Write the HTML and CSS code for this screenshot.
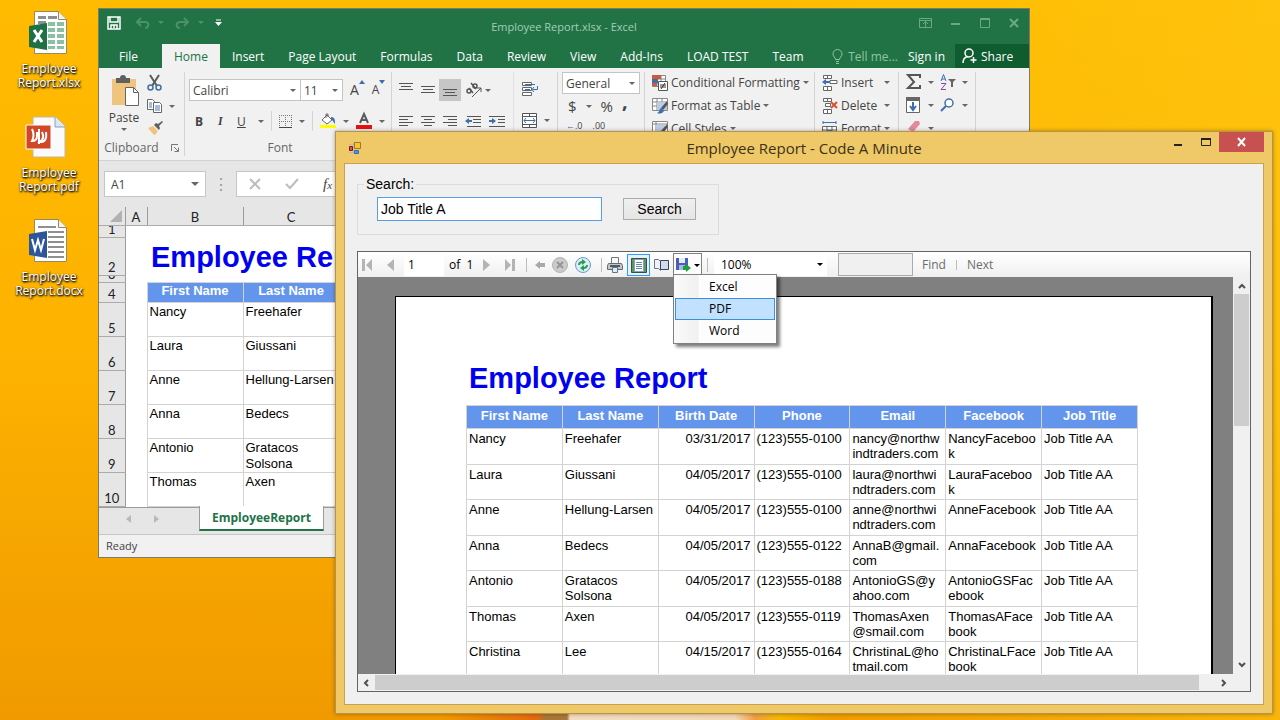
FILE: index.html
```html
<!DOCTYPE html>
<html lang="en">
<head>
    <meta charset="UTF-8">
    <meta name="viewport" content="width=device-width, initial-scale=1.0">
    <title>Employee Report - Code A Minute</title>
    <link rel="stylesheet" href="styles.css">
</head>
<body>
<div class="desktop">

    <!-- Desktop shortcuts -->
    <nav class="shortcuts">
        <a href="#" class="shortcut">
            <svg width="42" height="46" viewBox="0 0 42 46">
                <path d="M6.500 1.500h24l8 8v34h-32z" fill="#fff" stroke="#9a8a5a"/>
                <path d="M30.500 1.500v8h8" fill="#f2f2f2" stroke="#9a8a5a"/>
                <path d="M10 6h8v3h-8zM20 6h9v3h-9zM10 11h8v3h-8z" fill="#8f8f8f"/>
                <path d="M20 12h7v4h-7zM29 12h7v4h-7zM20 18h7v4h-7zM29 18h7v4h-7zM20 24h7v4h-7zM29 24h7v4h-7zM20 30h7v4h-7zM29 30h7v4h-7zM20 36h7v3h-7zM29 36h7v3h-7z" fill="#8cc0a2"/>
                <path d="M1 16l18-3v27l-18-3z" fill="#1e7145"/>
                <path d="M6 20l8 12M14 20l-8 12" stroke="#fff" stroke-width="3"/>
            </svg>
            <span>Employee Report.xlsx</span>
        </a>
        <a href="#" class="shortcut">
            <svg width="42" height="46" viewBox="0 0 42 46">
                <path d="M5 3h23l9 9v31h-32z" fill="#fafafc" stroke="#c8b890"/>
                <path d="M27 3v10h10" fill="#dbe6f4" stroke="#8aa0c0"/>
                <path d="M-2 11h25v24h-25z" fill="#d24726" stroke="#fff"/>
                <path d="M4 15c2 4 2 8 0 12c4 0 5-2 5-5v-4M11 15v15M14 18c2 4 2 7-2 10c5 0 7-3 6-10" fill="none" stroke="#fff" stroke-width="2"/>
            </svg>
            <span>Employee Report.pdf</span>
        </a>
        <a href="#" class="shortcut">
            <svg width="42" height="46" viewBox="0 0 42 46">
                <path d="M6.500 1.500h24l8 8v34h-32z" fill="#fff" stroke="#9a8a5a"/>
                <path d="M30.500 1.500v8h8" fill="#f2f2f2" stroke="#9a8a5a"/>
                <path d="M10 9h18M20 14h16M20 19h16M20 24h16M20 29h16M20 34h16M20 39h16" stroke="#8f8f8f" stroke-width="2"/>
                <path d="M1 16l18-3v27l-18-3z" fill="#2b579a"/>
                <path d="M4 21l3 11l3-10l3 10l3-11" fill="none" stroke="#fff" stroke-width="2"/>
            </svg>
            <span>Employee Report.docx</span>
        </a>
    </nav>

    <!-- Excel -->
    <section class="excel">
        <header class="excel-title">
            <div class="quick-access">
                <svg width="14" height="14" viewBox="0 0 14 14"><path d="M1 1h12v12h-12zM3 1v5h8v-5M4 13v-4h6v4M7 9v3" fill="none" stroke="#fff" stroke-width="1.500"/></svg>
                <svg class="faded" width="15" height="12" viewBox="0 0 15 12"><path d="M6 1l-4 4l4 4M2 5h8c5 0 4 6 0 6" fill="none" stroke="currentColor" stroke-width="2"/></svg>
                <i class="caret faded"></i>
                <svg class="faded redo" width="15" height="12" viewBox="0 0 15 12"><path d="M9 1l4 4l-4 4M13 5h-8c-5 0-4 6 0 6" fill="none" stroke="currentColor" stroke-width="2"/></svg>
                <i class="caret faded"></i>
                <svg class="customize" width="7" height="8" viewBox="0 0 7 8"><path d="M1 1h5" stroke="#fff"/><path d="M0 3h7l-3.500 4z" fill="#fff"/></svg>
            </div>
            <span class="excel-name">Employee Report.xlsx - Excel</span>
            <div class="excel-controls">
                <svg width="13" height="10" viewBox="0 0 13 10"><path d="M.5.500h12v9h-12zM1 2.500h11M6.500 9v-5M4 6l2.500-2.500l2.500 2.500" fill="none" stroke="currentColor"/></svg>
                <svg width="10" height="10" viewBox="0 0 10 10"><path d="M0 6h9" stroke="currentColor" stroke-width="2"/></svg>
                <svg width="10" height="10" viewBox="0 0 10 10"><path d="M.5.500h9v9h-9zM1 1.500h8" fill="none" stroke="currentColor"/></svg>
                <svg width="10" height="10" viewBox="0 0 10 10"><path d="M1 1l8 8M9 1l-8 8" stroke="currentColor" stroke-width="2"/></svg>
            </div>
        </header>

        <nav class="ribbon-tabs">
            <button class="file">File</button>
            <button class="active">Home</button>
            <button>Insert</button>
            <button>Page Layout</button>
            <button>Formulas</button>
            <button>Data</button>
            <button>Review</button>
            <button>View</button>
            <button>Add-Ins</button>
            <button>LOAD TEST</button>
            <button>Team</button>
            <button class="tell-me">
                <svg width="11" height="15" viewBox="0 0 11 15"><path d="M3.500 10.500c0-2-2.500-3-2.500-5.500a4.500 4.500 0 0 1 9 0c0 2.500-2.500 3.500-2.500 5.500zM4 12.500h3M4 14.500h3" fill="none" stroke="currentColor"/></svg>
                Tell me...
            </button>
            <button class="sign-in">Sign in</button>
            <button class="share">
                <svg width="15" height="16" viewBox="0 0 15 16"><circle cx="7" cy="5" r="4" fill="none" stroke="#fff" stroke-width="1.500"/><path d="M1 15c0-4 2-6 5-6.500M11.500 9v6M8.500 12h6" fill="none" stroke="#fff" stroke-width="1.500"/></svg>
                Share
            </button>
        </nav>

        <div class="ribbon">
            <div class="group clipboard">
                <div class="clipboard-tools">
                    <button class="paste">
                        <svg width="30" height="32" viewBox="0 0 30 32">
                            <path d="M3 4h24v26h-24z" fill="#efc57d"/>
                            <path d="M7 8v-5h4a3 3 0 0 1 6 0h4v5z" fill="#606060"/>
                            <path d="M16.500 12.500h8l5 5v13h-13z" fill="#fff" stroke="#666"/><path d="M24.500 12.500v5h5" fill="none" stroke="#666"/>
                        </svg>
                        Paste
                        <i class="caret"></i>
                    </button>
                    <div class="clip-side">
                        <svg width="15" height="16" viewBox="0 0 15 16"><path d="M3 0l7 11M12 0l-7 11" stroke="#5a5a5a" stroke-width="2"/><circle cx="3.500" cy="12.500" r="2.500" fill="none" stroke="#41719c" stroke-width="1.500"/><circle cx="11.500" cy="12.500" r="2.500" fill="none" stroke="#41719c" stroke-width="1.500"/></svg>
                        <span class="with-caret">
                            <svg width="16" height="14" viewBox="0 0 16 14"><path d="M.5.500h5l2 2v8h-7z" fill="#fff" stroke="#666"/><path d="M6.500 3.500h6l2 2v8h-8z" fill="#fff" stroke="#666"/><path d="M2 4h3M2 6h3M2 8h3M8 7h5M8 9h5M8 11h5" stroke="#4a7ab0"/></svg>
                            <i class="caret"></i>
                        </span>
                        <svg width="16" height="14" viewBox="0 0 16 14"><path d="M1 7l5-2l5 5l-3 4l-2-1z" fill="#efc57d"/><path d="M7 4l5 5l1-2l-1-2l4-4l-1-1l-4 3l-2-1z" fill="#5f5f5f"/></svg>
                    </div>
                </div>
                <div class="group-label">Clipboard
                    <svg width="8" height="8" viewBox="0 0 8 8"><path d="M.5 7v-6.500h6.500M3 3l4 4M7.500 3.500v4h-4" fill="none" stroke="#777"/></svg>
                </div>
            </div>

            <div class="group font">
                <div class="row font-row">
                    <label class="combo font-name"><select aria-label="Font"><option>Calibri</option></select><i class="caret"></i></label>
                    <label class="combo font-size"><select aria-label="Font size"><option>11</option></select><i class="caret"></i></label>
                    <span class="grow">A<svg width="6" height="4" viewBox="0 0 6 4"><path d="M0 4l3-4l3 4z" fill="#3d6fae"/></svg></span>
                    <span class="grow small">A<svg width="6" height="4" viewBox="0 0 6 4"><path d="M0 0l3 4l3-4z" fill="#3d6fae"/></svg></span>
                </div>
                <div class="row style-row">
                    <b>B</b>
                    <em>I</em>
                    <u>U</u>
                    <i class="caret"></i>
                    <i class="bar"></i>
                    <svg width="13" height="13" viewBox="0 0 13 13"><path d="M.5 0v12M6.500 0v12M12.500 0v12M0 .5h13M0 6.500h13" stroke="#777" stroke-dasharray="1 1"/><path d="M0 12.500h13" stroke="#444"/></svg>
                    <i class="caret"></i>
                    <i class="bar"></i>
                    <svg width="16" height="16" viewBox="0 0 16 16"><path d="M2 7l5-5l5 5l-5 4zM6 5v-4h2v3" fill="#fff" stroke="#666"/><path d="M11 4c4 0 4 3 4 7c-2-2-2-4-4-5z" fill="#3d6fae"/><path d="M0 12h16v3h-16z" fill="#ff0"/></svg>
                    <i class="caret"></i>
                    <svg width="16" height="16" viewBox="0 0 16 16"><path d="M4 10l4-9l4 9M5 7h6" fill="none" stroke="#5a5a5a" stroke-width="2"/><path d="M0 12h16v4h-16z" fill="#e81010"/></svg>
                    <i class="caret"></i>
                </div>
                <div class="group-label">Font</div>
            </div>

            <div class="group align">
                <div class="align-main">
                    <div class="row align-row">
                        <svg width="14" height="14" viewBox="0 0 14 14"><path d="M0 .5h14M2 3.500h10M0 6.500h14" stroke="#555"/></svg>
                        <svg width="14" height="14" viewBox="0 0 14 14"><path d="M0 3.500h14M2 6.500h10M0 9.500h14" stroke="#555"/></svg>
                        <span class="pressed"><svg width="14" height="14" viewBox="0 0 14 14"><path d="M0 6.500h14M2 9.500h10M0 12.500h14" stroke="#555"/></svg></span>
                        <span class="with-caret">
                            <svg width="18" height="16" viewBox="0 0 18 16"><circle cx="4" cy="9" r="2" fill="none" stroke="#555" stroke-width="1.500"/><path d="M4 6l4 5M6 1l5 6" stroke="#555" stroke-width="1.500"/><circle cx="10" cy="4" r="2" fill="none" stroke="#555" stroke-width="1.500"/><path d="M7 15l9-9M12 6h4v4" fill="none" stroke="#555"/></svg>
                            <i class="caret"></i>
                        </span>
                    </div>
                    <div class="row align-row">
                        <svg width="14" height="12" viewBox="0 0 14 12"><path d="M0 .5h14M0 3.500h9M0 6.500h14M0 9.500h9" stroke="#555"/></svg>
                        <svg width="14" height="12" viewBox="0 0 14 12"><path d="M0 .5h14M3 3.500h8M0 6.500h14M3 9.500h8" stroke="#555"/></svg>
                        <svg width="14" height="12" viewBox="0 0 14 12"><path d="M0 .5h14M5 3.500h9M0 6.500h14M5 9.500h9" stroke="#555"/></svg>
                        <svg width="16" height="12" viewBox="0 0 16 12"><path d="M2 .5h14M8 3.500h8M8 6.500h8M2 10.500h14" stroke="#555"/><path d="M0 5l4-3v2h3v2h-3v2z" fill="#3d6fae"/></svg>
                        <svg width="16" height="12" viewBox="0 0 16 12"><path d="M0 .5h16M9 3.500h7M9 6.500h7M0 10.500h16" stroke="#555"/><path d="M7 5l-4-3v2h-3v2h3v2z" fill="#3d6fae"/></svg>
                    </div>
                </div>
                <div class="wrap-merge">
                    <svg width="16" height="16" viewBox="0 0 16 16"><path d="M.5 1.500h9v3h-9zM.5 6.500h9v3h-9zM.5 11.500h9v3h-9z" fill="#fff" stroke="#666"/><path d="M3 3.500h10M3 8.500h5" stroke="#3d6fae"/><path d="M15.500 5v3.500h-5M12 6l-2 2.500l2 2.500" fill="none" stroke="#3d6fae"/></svg>
                    <span class="with-caret">
                        <svg width="15" height="15" viewBox="0 0 15 15"><path d="M.5.500h14v14h-14zM.5 3.500h14M.5 11.500h14M7.500 0v3M7.500 12v3" fill="#fff" stroke="#555"/><path d="M2 7.500h11M4 5l-2 2.500l2 2.500M11 5l2 2.500l-2 2.500" fill="none" stroke="#3d6fae"/></svg>
                        <i class="caret"></i>
                    </span>
                </div>
            </div>

            <div class="group number">
                <label class="combo"><select aria-label="Number format"><option>General</option></select><i class="caret"></i></label>
                <div class="row symbols"><span>$</span><i class="caret"></i><span>%</span><span class="comma">,</span></div>
                <div class="row decimals"><span><i>←</i>.0<br>.00</span><span>.00<br><i>→</i>.0</span></div>
            </div>

            <div class="group styles">
                <button><svg width="16" height="16" viewBox="0 0 16 16"><path d="M.5.500h13v11h-13zM5 0v11M9 0v11M0 4h14M0 8h14" fill="#fff" stroke="#888"/><path d="M0 0h9v4h-9z" fill="#d0583c"/><path d="M0 4h6v4h-6z" fill="#3d6fae"/><path d="M0 8h5v3h-5z" fill="#d0583c"/><path d="M6.500 6.500h9v9h-9z" fill="#fff" stroke="#555"/><path d="M8 10h6M8 12h6M13 8l-4 6" stroke="#333"/></svg>Conditional Formatting<i class="caret"></i></button>
                <button><svg width="16" height="16" viewBox="0 0 16 16"><path d="M.5.500h15v12h-15zM5 0v12M10 0v12M0 4h16M0 8h16" fill="#fff" stroke="#888"/><path d="M5 4h10v8h-10z" fill="#b9cde4"/><path d="M15 3l-6 7l2 2l5-6z" fill="#555"/><path d="M9 10l3 3c-2 3-5 3-7 2c3-1 2-4 4-5z" fill="#3d6fae"/></svg>Format as Table<i class="caret"></i></button>
                <button><svg width="16" height="16" viewBox="0 0 16 16"><path d="M.5.500h15v12h-15zM4 0v12M0 3h16" fill="#fff" stroke="#888"/><path d="M4 4h9v8h-9z" fill="#b9cde4"/><path d="M15 3l-6 7l2 2l5-6z" fill="#555"/></svg>Cell Styles<i class="caret"></i></button>
            </div>

            <div class="group cells">
                <button><svg width="16" height="16" viewBox="0 0 16 16"><path d="M1.500.500h8v3h-8zM1.500 11.500h8v4h-8zM5.500 0v3M5.500 11v4M8 5.500h7v3h-7z" fill="#fff" stroke="#666"/><path d="M0 7l4-3v2h4v2h-4v2z" fill="#3d6fae"/></svg><span>Insert</span><i class="caret"></i></button>
                <button><svg width="16" height="16" viewBox="0 0 16 16"><path d="M1.500.500h8v3h-8zM1.500 11.500h8v4h-8zM5.500 0v3M5.500 11v4M3.500 5.500h5v3h-5z" fill="#fff" stroke="#666"/><path d="M9 4l6 6M15 4l-6 6" stroke="#d6532f" stroke-width="2"/></svg><span>Delete</span><i class="caret"></i></button>
                <button><svg width="16" height="16" viewBox="0 0 16 16"><path d="M1 1.500h13M1 0v3M14 0v3" stroke="#3d6fae"/><path d="M.5 5.500h14v10h-14zM5 5v10M10 5v10M0 9h15" fill="#fff" stroke="#666"/><path d="M5 9h5v5h-5z" fill="#3d6fae"/></svg><span>Format</span><i class="caret"></i></button>
            </div>

            <div class="group editing">
                <svg width="16" height="16" viewBox="0 0 16 16"><path d="M14 4v-3h-12l6 7l-6 6h12v-3" fill="none" stroke="#555" stroke-width="2"/></svg><i class="caret"></i>
                <svg width="16" height="16" viewBox="0 0 16 16"><path d="M1 7l2.500-6.500l2.500 6.500M2 5h3" fill="none" stroke="#3d6fae"/><path d="M1 9.500h5l-5 6h5" fill="none" stroke="#8a4aa8"/><path d="M8 5h8l-3 3v5h-2v-5z" fill="#666"/></svg><i class="caret"></i>
                <svg width="15" height="16" viewBox="0 0 15 16"><path d="M.5.500h13v15h-13z" fill="#fff" stroke="#666"/><path d="M0 0h14v4h-14z" fill="#666"/><path d="M7 5v8M4 9l3 4l3-4" fill="none" stroke="#3d6fae" stroke-width="2"/></svg><i class="caret"></i>
                <svg width="14" height="14" viewBox="0 0 14 14"><circle cx="9" cy="5" r="4" fill="#fff" stroke="#3d6fae" stroke-width="1.500"/><path d="M6 8l-5 5" stroke="#3d6fae" stroke-width="2"/></svg><i class="caret"></i>
                <svg width="16" height="16" viewBox="0 0 16 16"><path d="M9 1h4l1 3l-7 8l-5-3z" fill="#e58a9c"/></svg><i class="caret"></i>
            </div>
        </div>

        <div class="formula-bar">
            <label class="name-box"><input type="text" value="A1" aria-label="Name box"><i class="caret"></i></label>
            <i class="dots">⋮</i>
            <div class="formula">
                <svg width="12" height="12" viewBox="0 0 12 12"><path d="M1 1l10 10M11 1l-10 10" stroke="#bdbdbd" stroke-width="2"/></svg>
                <svg width="14" height="12" viewBox="0 0 14 12"><path d="M1 6l4 4l8-9" fill="none" stroke="#bdbdbd" stroke-width="2"/></svg>
                <em>f<small>x</small></em>
            </div>
        </div>

        <table class="sheet">
            <colgroup><col class="col-num"><col class="col-a"><col class="col-b"><col class="col-b"><col></colgroup>
            <thead>
                <tr><th class="corner"><svg width="12" height="12" viewBox="0 0 12 12"><path d="M12 0v12h-12z" fill="#b2b2b2"/></svg></th><th>A</th><th>B</th><th>C</th><th></th></tr>
            </thead>
            <tbody>
                <tr class="h12"><th><span>1</span></th><td></td><td></td><td></td><td></td></tr>
                <tr class="h38"><th>2</th><td></td><td colspan="3" class="sheet-title">Employee Report</td></tr>
                <tr class="h7"><th><span>3</span></th><td></td><td></td><td></td><td></td></tr>
                <tr class="h20"><th>4</th><td></td><td class="head">First Name</td><td class="head">Last Name</td><td></td></tr>
                <tr><th>5</th><td></td><td class="cell">Nancy</td><td class="cell">Freehafer</td><td></td></tr>
                <tr><th>6</th><td></td><td class="cell">Laura</td><td class="cell">Giussani</td><td></td></tr>
                <tr><th>7</th><td></td><td class="cell">Anne</td><td class="cell">Hellung-Larsen</td><td></td></tr>
                <tr><th>8</th><td></td><td class="cell">Anna</td><td class="cell">Bedecs</td><td></td></tr>
                <tr><th>9</th><td></td><td class="cell">Antonio</td><td class="cell">Gratacos<br>Solsona</td><td></td></tr>
                <tr><th>10</th><td></td><td class="cell">Thomas</td><td class="cell">Axen</td><td></td></tr>
            </tbody>
        </table>

        <div class="sheet-tabs">
            <svg width="5" height="8" viewBox="0 0 5 8"><path d="M5 0v8l-5-4z" fill="#b8b8b8"/></svg>
            <svg width="5" height="8" viewBox="0 0 5 8"><path d="M0 0v8l5-4z" fill="#b8b8b8"/></svg>
            <button>EmployeeReport</button>
        </div>
        <footer class="excel-status">Ready</footer>
    </section>

    <!-- Report viewer -->
    <section class="report-window">
        <header class="report-title">
            <svg class="app-icon" width="14" height="14" viewBox="0 0 14 14">
                <path d="M6.500 1.500h6v6h-6z" fill="#f7c52e" stroke="#9a7a28"/>
                <path d="M1.500 5.500h3v4h-3z" fill="#d35050" stroke="#8c1616"/>
                <path d="M6.500 9.500h4v3h-4z" fill="#5a92ea" stroke="#3a66b4"/>
                <path d="M5.500 1v12M1 3.500h4M1 11.500h4" stroke="#bdb9b0"/>
            </svg>
            <h1>Employee Report - Code A Minute</h1>
            <div class="window-controls">
                <svg width="8" height="10" viewBox="0 0 8 10"><path d="M0 8h8" stroke="#222" stroke-width="2"/></svg>
                <svg width="10" height="8" viewBox="0 0 10 8"><path d="M.5 1h9v6.500h-9z" fill="none" stroke="#222"/><path d="M0 1h10" stroke="#222" stroke-width="2"/></svg>
                <button class="close" aria-label="Close"><svg width="9" height="8" viewBox="0 0 9 8"><path d="M1 0l7 8M8 0l-7 8" stroke="#fff" stroke-width="2"/></svg></button>
            </div>
        </header>

        <div class="client">
            <fieldset class="search">
                <legend>Search:</legend>
                <div class="search-row">
                    <input type="text" value="Job Title A" aria-label="Search">
                    <button>Search</button>
                </div>
            </fieldset>

            <div class="viewer">
                <div class="toolbar">
                    <div class="tools nav">
                        <svg width="11" height="12" viewBox="0 0 11 12"><path d="M0 0h3v12h-3zM10 0v12l-6-6z" fill="#b4b4b4"/></svg>
                        <svg width="7" height="12" viewBox="0 0 7 12"><path d="M7 0v12l-7-6z" fill="#b4b4b4"/></svg>
                        <input type="text" class="page-no" value="1" aria-label="Current page">
                        <span class="of">of&nbsp; 1</span>
                        <svg width="7" height="12" viewBox="0 0 7 12"><path d="M0 0v12l7-6z" fill="#b4b4b4"/></svg>
                        <svg width="11" height="12" viewBox="0 0 11 12"><path d="M8 0h3v12h-3zM1 0v12l6-6z" fill="#b4b4b4"/></svg>
                    </div>
                    <i class="divider"></i>
                    <div class="tools actions">
                        <svg width="10" height="10" viewBox="0 0 10 10"><path d="M0 5l5-4v2h5v4h-5v2z" fill="#a9a9a9"/></svg>
                        <svg width="16" height="16" viewBox="0 0 16 16"><circle cx="8" cy="8" r="7.500" fill="#cbcbcb" stroke="#b4b4b4"/><path d="M5 5l6 6M11 5l-6 6" stroke="#959595" stroke-width="2"/></svg>
                        <svg width="16" height="16" viewBox="0 0 16 16"><circle cx="8" cy="8" r="7.500" fill="#dcecfa" stroke="#6a9bd0"/><path d="M4 8c0-2 1-3 4-3M12 8c0 2-1 3-4 3" fill="none" stroke="#22a045" stroke-width="2"/><path d="M7 2l4 3l-4 3zM9 8l-4 3l4 3z" fill="#22a045"/></svg>
                    </div>
                    <i class="divider"></i>
                    <div class="tools output">
                        <svg width="16" height="16" viewBox="0 0 16 16"><path d="M4.500.500h7v6h-7z" fill="#f4f8fc" stroke="#777"/><path d="M1.500 6.500h13l1 2v4h-15v-4z" fill="#c2c5ca" stroke="#66696f"/><path d="M3 9h10" stroke="#55585e" stroke-width="2"/><path d="M5.500 10.500h5v5h-5z" fill="#d9effa" stroke="#5e7686"/></svg>
                        <button class="toggled" aria-label="Print layout"><svg width="16" height="16" viewBox="0 0 16 16"><path d="M.5.500h15v14h-15z" fill="#5f9269" stroke="#2f5438"/><path d="M3.500 1.500h9v12h-9z" fill="#fff" stroke="#8aa0b8"/><path d="M5 4.500h6M5 6.500h6M5 8.500h6M5 10.500h6" stroke="#6787b8"/></svg></button>
                        <svg width="15" height="13" viewBox="0 0 15 13"><path d="M.5 10.500v-9h4l2 2v9l-2-2z" fill="#eef2f8" stroke="#6d7684"/><path d="M6.500 2.500h8v9h-8z" fill="#cfdcf0" stroke="#3a4454"/></svg>
                        <div class="export">
                            <button class="export-button" aria-label="Export"><svg width="16" height="16" viewBox="0 0 16 16"><path d="M1 1h12v12h-12z" fill="#4a5fb8"/><path d="M4 1h6v5h-6z" fill="#e6ecfa"/><path d="M4 8h6v5h-6z" fill="#a8b6e0"/><path d="M8 9h3v-2l5 4l-5 4v-2h-3z" fill="#1ea03a"/></svg><i class="caret"></i></button>
                            <div class="menu">
                                <button>Excel</button>
                                <button class="hover">PDF</button>
                                <button>Word</button>
                            </div>
                        </div>
                    </div>
                    <i class="divider"></i>
                    <label class="zoom"><select aria-label="Zoom"><option>100%</option></select><i class="caret"></i></label>
                    <input type="text" class="find-box" aria-label="Find text">
                    <a href="#">Find</a>
                    <i class="divider short"></i>
                    <a href="#">Next</a>
                </div>

                <div class="viewport">
                    <div class="canvas">
                        <article class="page">
                            <h2>Employee Report</h2>
                            <table class="report">
                                <thead>
                                    <tr><th>First Name</th><th>Last Name</th><th>Birth Date</th><th>Phone</th><th>Email</th><th>Facebook</th><th>Job Title</th></tr>
                                </thead>
                                <tbody>
                                    <tr><td>Nancy</td><td>Freehafer</td><td>03/31/2017</td><td>(123)555-0100</td><td>nancy@northw<br>indtraders.com</td><td>NancyFaceboo<br>k</td><td>Job Title AA</td></tr>
                                    <tr><td>Laura</td><td>Giussani</td><td>04/05/2017</td><td>(123)555-0100</td><td>laura@northwi<br>ndtraders.com</td><td>LauraFaceboo<br>k</td><td>Job Title AA</td></tr>
                                    <tr><td>Anne</td><td>Hellung-Larsen</td><td>04/05/2017</td><td>(123)555-0100</td><td>anne@northwi<br>ndtraders.com</td><td>AnneFacebook</td><td>Job Title AA</td></tr>
                                    <tr><td>Anna</td><td>Bedecs</td><td>04/05/2017</td><td>(123)555-0122</td><td>AnnaB@gmail.<br>com</td><td>AnnaFacebook</td><td>Job Title AA</td></tr>
                                    <tr><td>Antonio</td><td>Gratacos<br>Solsona</td><td>04/05/2017</td><td>(123)555-0188</td><td>AntonioGS@y<br>ahoo.com</td><td>AntonioGSFac<br>ebook</td><td>Job Title AA</td></tr>
                                    <tr><td>Thomas</td><td>Axen</td><td>04/05/2017</td><td>(123)555-0119</td><td>ThomasAxen<br>@smail.com</td><td>ThomasAFace<br>book</td><td>Job Title AA</td></tr>
                                    <tr><td>Christina</td><td>Lee</td><td>04/15/2017</td><td>(123)555-0164</td><td>ChristinaL@ho<br>tmail.com</td><td>ChristinaLFace<br>book</td><td>Job Title AA</td></tr>
                                </tbody>
                            </table>
                        </article>
                    </div>
                    <div class="scroll-v">
                        <svg width="8" height="6" viewBox="0 0 8 6"><path d="M1 5l3-3l3 3" fill="none" stroke="#505050" stroke-width="2"/></svg>
                        <div class="thumb"></div>
                        <svg width="8" height="6" viewBox="0 0 8 6"><path d="M1 1l3 3l3-3" fill="none" stroke="#505050" stroke-width="2"/></svg>
                    </div>
                </div>
                <div class="scroll-h">
                    <svg width="6" height="8" viewBox="0 0 6 8"><path d="M5 1l-3 3l3 3" fill="none" stroke="#505050" stroke-width="2"/></svg>
                    <div class="thumb"></div>
                    <svg width="6" height="8" viewBox="0 0 6 8"><path d="M1 1l3 3l-3 3" fill="none" stroke="#505050" stroke-width="2"/></svg>
                </div>
            </div>
        </div>
    </section>
</div>
</body>
</html>
```
FILE: styles.css
```css
* {
    margin: 0;
    padding: 0;
    box-sizing: border-box;
}

body {
    font-family: 'Open Sans', 'Noto Sans', sans-serif;
    font-size: 12px;
    color: #444;
}

button, input, select {
    font: inherit;
    color: inherit;
    background: none;
    border: none;
    border-radius: 0;
    appearance: none;
    outline: none;
}

svg {
    display: block;
    flex: none;
    overflow: visible;
}

.desktop {
    position: relative;
    min-height: 100vh;
    overflow: hidden;
    background:
        linear-gradient(90deg, #f09a00 335px, #f09a00 440px, #e26a10 538px, #a87838 545px, #a87838 567px, #f3dcc0 570px, #f3d9b8 735px, #f0a040 755px, #f6b800 780px, transparent 830px) bottom / 100% 6px no-repeat,
        linear-gradient(90deg, transparent 60%, rgba(255, 200, 20, 0.6)),
        linear-gradient(#ffbb00, #fdb200 50%, #f09a00);
}

.caret {
    flex: none;
    width: 0;
    border: 3px solid transparent;
    border-top-color: #666;
    border-bottom: 0;
}

/* Desktop shortcuts */

.shortcuts {
    width: 98px;
    padding-top: 10px;
    display: flex;
    flex-direction: column;
    gap: 26px;
}

.shortcut {
    height: 78px;
    display: flex;
    flex-direction: column;
    align-items: center;
    gap: 6px;
    color: #fff;
    text-align: center;
    text-decoration: none;
    line-height: 14px;
    text-shadow: 0 1px 2px #000, 1px 1px 2px #000;
}

.shortcut span {
    width: 76px;
}

/* Excel window */

.excel {
    position: absolute;
    left: 98px;
    top: 8px;
    right: 250px;
    border: 1px solid #7a7a6a;
    background: #f1f1f1;
}

.excel-title {
    height: 35px;
    display: grid;
    grid-template-columns: 1fr auto 1fr;
    align-items: center;
    background: #217346;
    color: #a5cdb5;
}

.excel-name {
    font-size: 11px;
}

.quick-access {
    display: flex;
    align-items: center;
    gap: 8px;
    padding: 0 0 8px 8px;
}

.quick-access svg:first-child {
    margin-right: 6px;
}

.quick-access .faded {
    color: #4b9169;
}

.quick-access .caret.faded {
    border-top-color: #4b9169;
}

.redo {
    margin-left: 3px;
}

.customize {
    margin-left: 3px;
}

.excel-controls {
    display: flex;
    justify-content: flex-end;
    gap: 19px;
    padding: 0 10px 8px 0;
    color: #6aa886;
}

.ribbon-tabs {
    height: 24px;
    display: flex;
    background: #217346;
    color: #fff;
}

.ribbon-tabs button {
    flex: none;
    padding: 0 12px;
    white-space: nowrap;
}

.ribbon-tabs .file {
    width: 63px;
    padding: 0 4px 0 0;
}

.ribbon-tabs .active {
    background: #f1f1f1;
    color: #217346;
}

.ribbon-tabs .tell-me {
    display: flex;
    align-items: center;
    gap: 5px;
    margin-left: auto;
    padding: 0 5px;
    color: #90c3a5;
}

.ribbon-tabs .sign-in {
    padding: 0 10px 0 5px;
}

.ribbon-tabs .share {
    width: 74px;
    display: flex;
    align-items: center;
    gap: 4px;
    padding: 0 7px;
    background: #0e5c2f;
}

.ribbon {
    height: 93px;
    display: flex;
    padding: 4px 0;
    border-bottom: 1px solid #d2d2d2;
}

.group {
    display: flex;
    flex: none;
    border-right: 1px solid #d4d4d4;
}

.group-label {
    display: flex;
    justify-content: center;
    gap: 12px;
    align-items: center;
    line-height: 16px;
    color: #666;
}

.row, .with-caret {
    display: flex;
    align-items: center;
}

.combo {
    height: 22px;
    display: flex;
    align-items: center;
    padding: 0 4px 0 3px;
    border: 1px solid #c4c4c4;
    background: #fff;
}

.combo select {
    flex: 1;
    min-width: 0;
}

.clipboard {
    width: 86px;
    flex-direction: column;
}

.clipboard .group-label {
    margin-top: auto;
}

.clipboard-tools {
    display: flex;
    gap: 8px;
    padding: 3px 0 0 10px;
}

.paste {
    width: 30px;
    display: flex;
    flex-direction: column;
    align-items: center;
    gap: 2px;
}

.clip-side {
    display: flex;
    flex-direction: column;
    gap: 8px;
}

.clip-side .with-caret {
    gap: 6px;
}

.font {
    width: 207px;
    padding: 7px 0 0 4px;
    flex-direction: column;
}

.font .group-label {
    margin-top: auto;
    padding-right: 20px;
}

.font-name {
    width: 112px;
}

.font-size {
    width: 42px;
    border-left: 0;
}

.grow {
    display: flex;
    padding-left: 7px;
    font-size: 14px;
    line-height: 20px;
}

.grow.small {
    font-size: 12px;
}

.style-row {
    height: 20px;
    margin-top: 10px;
    padding-left: 6px;
    gap: 7px;
    font-size: 12px;
}

.style-row b, .style-row em, .style-row u {
    width: 14px;
}

.style-row em {
    font-family: 'Liberation Serif', serif;
    font-weight: bold;
    padding-left: 2px;
}

.bar {
    width: 1px;
    height: 20px;
    background: #d4d4d4;
}

.align {
    width: 166px;
}

.align-main {
    width: 122px;
    padding: 7px 0 0 7px;
    border-right: 1px solid #e0e0e0;
}

.align-row {
    height: 22px;
    gap: 8px;
    margin-bottom: 10px;
}

.align-row .with-caret {
    gap: 2px;
}

.pressed {
    height: 22px;
    margin: 0 -4px;
    padding: 4px;
    background: #c6c6c6;
}

.wrap-merge {
    padding: 9px 0 0 8px;
    display: flex;
    flex-direction: column;
    gap: 16px;
}

.wrap-merge .with-caret {
    gap: 7px;
}

.number {
    width: 87px;
    padding: 0 4px;
    flex-direction: column;
}

.symbols {
    height: 24px;
    gap: 9px;
    padding-left: 6px;
    font-size: 15px;
}

.symbols .comma {
    font-size: 20px;
    font-weight: bold;
    line-height: 12px;
    padding-bottom: 10px;
}

.decimals {
    gap: 10px;
    padding-left: 4px;
    font-size: 9px;
    line-height: 12px;
    margin-top: 2px;
}

.decimals i {
    color: #3d6fae;
    font-style: normal;
}

.styles, .cells {
    flex-direction: column;
    padding: 0 7px;
}

.styles {
    width: 170px;
}

.cells {
    width: 84px;
}

.styles button, .cells button {
    height: 23px;
    display: flex;
    align-items: center;
    gap: 3px;
    padding-bottom: 2px;
    white-space: nowrap;
}

.cells button span {
    width: 40px;
    text-align: left;
}

.editing {
    width: 77px;
    display: grid;
    grid-template-columns: 16px 6px 16px 6px;
    grid-auto-rows: 16px;
    gap: 7px 6px;
    align-items: center;
    padding: 2px 0 0 7px;
}

.formula-bar {
    height: 46px;
    display: flex;
    align-items: center;
    padding-left: 5px;
    background: #e6e6e6;
}

.name-box {
    width: 102px;
    height: 26px;
    display: flex;
    align-items: center;
    padding: 0 6px;
    border: 1px solid #c6c6c6;
    background: #fff;
}

.name-box input {
    flex: 1;
    min-width: 0;
}

.name-box .caret {
    border-width: 4px 4px 0;
}

.dots {
    width: 30px;
    text-align: center;
    font-style: normal;
    font-size: 16px;
    color: #999;
}

.formula {
    flex: 1;
    height: 26px;
    display: flex;
    align-items: center;
    gap: 24px;
    padding-left: 12px;
    border: 1px solid #c6c6c6;
    background: #fff;
}

.formula em {
    font-family: 'Liberation Serif', serif;
    font-size: 15px;
}

.formula small {
    font-size: 11px;
}

.sheet {
    width: 100%;
    table-layout: fixed;
    border-collapse: collapse;
    background: #fff;
    font: 13px/16px 'Liberation Sans', Arial, sans-serif;
    color: #000;
}

.col-num {
    width: 26px;
}

.col-a {
    width: 22px;
}

.col-b {
    width: 96px;
}

.sheet th {
    font: 13px/16px Lato, sans-serif;
    color: #222;
    background: #e6e6e6;
    border-right: 1px solid #9b9b9b;
    border-bottom: 1px solid #ababab;
    vertical-align: bottom;
}

.sheet thead th {
    height: 18px;
}

.sheet .corner svg {
    margin: 0 3px 3px auto;
}

.sheet tbody tr {
    height: 34px;
}

.sheet tbody .h12 {
    height: 12px;
}

.sheet tbody .h38 {
    height: 38px;
}

.sheet tbody .h7 {
    height: 7px;
}

.sheet tbody .h20 {
    height: 20px;
}

/* Rows shorter than a line of text show only a slice of their number */
.h12 span, .h7 span {
    height: 11px;
    display: flex;
    align-items: flex-end;
    justify-content: center;
    overflow: hidden;
}

.h7 span {
    height: 6px;
}

.sheet .sheet-title {
    padding: 2px 0 0 4px;
    font-size: 29px;
    line-height: 34px;
    font-weight: bold;
    color: #0000f0;
}

.sheet .head, .sheet .cell {
    border: 1px solid #d3d3d3;
    vertical-align: top;
}

.sheet .head {
    background: #6495ed;
    color: #fff;
    font-weight: bold;
    text-align: center;
}

.sheet .cell {
    padding: 1px 0 0 2px;
}

.sheet-tabs {
    height: 28px;
    display: flex;
    align-items: center;
    gap: 23px;
    padding: 0 0 4px 27px;
    border-top: 1px solid #9b9b9b;
    border-bottom: 1px solid #c6c6c6;
    background: #e6e6e6;
}

.sheet-tabs button {
    height: 25px;
    margin: -1px 0 0 17px;
    padding: 0 12px;
    border: 1px solid #9b9b9b;
    border-top: 0;
    border-bottom: 2px solid #217346;
    background: #fff;
    color: #217346;
    font-weight: bold;
}

.excel-status {
    height: 22px;
    padding-left: 7px;
    font-size: 11px;
    line-height: 22px;
}

/* Report window */

.report-window {
    position: absolute;
    left: 335px;
    top: 131px;
    right: 7px;
    bottom: 6px;
    display: flex;
    flex-direction: column;
    padding: 0 8px 8px;
    border: 1px solid #b8924a;
    background: #efc868;
    box-shadow: 0 0 4px rgba(0, 0, 0, 0.35);
}

.report-title {
    height: 31px;
    flex: none;
    display: grid;
    grid-template-columns: 1fr auto 1fr;
    align-items: center;
}

.report-title h1 {
    font-size: 15px;
    line-height: 30px;
    font-weight: normal;
    color: #3c3218;
}

.app-icon {
    margin-left: 4px;
}

.window-controls {
    align-self: start;
    display: flex;
    justify-content: flex-end;
    align-items: center;
    gap: 19px;
}

.close {
    width: 45px;
    height: 20px;
    display: flex;
    align-items: center;
    justify-content: center;
    margin-left: -11px;
    background: #c75050;
}

.client {
    flex: 1;
    min-height: 0;
    display: flex;
    flex-direction: column;
    align-items: flex-start;
    padding: 12px;
    border: 1px solid #c9a050;
    background: #f0f0f0;
    color: #000;
}

.search {
    width: 362px;
    height: 59px;
    padding: 5px 19px;
    border: 1px solid #dcdcdc;
    font: 14px/16px 'Liberation Sans', Arial, sans-serif;
}

.search legend {
    margin-left: -13px;
    padding: 0 2px;
}

.search-row {
    display: flex;
    align-items: center;
    gap: 21px;
}

.search-row input {
    width: 225px;
    height: 24px;
    padding-left: 3px;
    border: 1px solid #569de5;
    background: #fff;
}

.search-row button {
    width: 73px;
    height: 22px;
    border: 1px solid #acacac;
    background: linear-gradient(#f0f0f0, #e5e5e5);
}

.viewer {
    flex: 1;
    width: 100%;
    min-height: 0;
    margin-top: 16px;
    display: flex;
    flex-direction: column;
    border: 1px solid #646464;
    background: #f0f0f0;
}

.toolbar {
    height: 25px;
    flex: none;
    display: flex;
    align-items: center;
    padding-left: 4px;
    background: linear-gradient(#fff, #f0f0f0);
}

.toolbar a {
    color: #6d6d6d;
    text-decoration: none;
}

.toolbar .caret {
    border-top-color: #000;
}

.tools {
    display: flex;
    align-items: center;
}

.nav {
    width: 164px;
    gap: 14px;
}

.page-no {
    width: 40px;
    height: 22px;
    margin-left: -4px;
    padding-left: 4px;
    background: #fff;
}

.of {
    margin: 0 -4px 0 -9px;
}

.divider {
    width: 1px;
    height: 14px;
    background: #bdbdbd;
}

.divider.short {
    height: 10px;
    margin: 0 10px;
}

.actions {
    width: 74px;
    gap: 7px;
    padding-left: 8px;
}

.output {
    width: 105px;
    gap: 4px;
    padding-left: 5px;
}

.toggled {
    width: 23px;
    height: 22px;
    padding: 3px;
    border: 1px solid #3399ff;
    background: #e6f1fc;
}

.export {
    position: relative;
}

.export-button {
    width: 29px;
    height: 24px;
    display: flex;
    align-items: center;
    gap: 3px;
    padding-left: 1px;
    border: 1px solid #808080;
    border-bottom: 0;
    background: #fdfdfd;
}

.menu {
    position: absolute;
    left: 0;
    top: 21px;
    z-index: 1;
    width: 104px;
    display: flex;
    flex-direction: column;
    padding: 1px;
    border: 1px solid #808080;
    background: linear-gradient(90deg, #fafafa, #f0f0f0 24px, #fdfdfd 25px);
    box-shadow: 3px 3px 3px rgba(0, 0, 0, 0.5);
}

.menu button {
    height: 22px;
    padding-left: 33px;
    border: 1px solid transparent;
    text-align: left;
}

.menu .hover {
    border-color: #3c8fe0;
    background: #c2e0ff;
}

.zoom {
    width: 113px;
    height: 22px;
    display: flex;
    align-items: center;
    margin: 0 11px 0 6px;
    padding: 0 4px 0 7px;
    background: #fff;
}

.zoom select {
    flex: 1;
}

.find-box {
    width: 75px;
    height: 23px;
    margin-right: 9px;
    border: 1px solid #ababab;
    background: #f0f0f0;
}

.viewport {
    flex: 1;
    min-height: 0;
    display: flex;
}

.canvas {
    flex: 1;
    display: flex;
    padding: 19px 20px 0 37px;
    overflow: hidden;
    background: #808080;
}

.page {
    flex: 1;
    height: 1056px;
    padding: 64px 70px;
    border: 1px solid #000;
    border-right-width: 2px;
    background: #fff;
}

.page h2 {
    padding-left: 3px;
    font: bold 29px/34px 'Liberation Sans', Arial, sans-serif;
    color: #0000f0;
}

.report {
    margin-top: 10px;
    table-layout: fixed;
    width: 672px;
    border-collapse: collapse;
    font: 13px/15px 'Liberation Sans', Arial, sans-serif;
}

.report th {
    height: 23px;
    padding-bottom: 3px;
    border: 1px solid #d3d3d3;
    background: #6495ed;
    color: #fff;
}

.report td {
    padding: 2px 2px 0;
    border: 1px solid #d3d3d3;
    vertical-align: top;
    white-space: nowrap;
}

.report tbody tr {
    height: 35px;
}

.report tbody tr:nth-child(odd) {
    height: 36px;
}

.report td:nth-child(3) {
    padding-right: 3px;
    text-align: right;
}

.scroll-v {
    width: 17px;
    display: flex;
    flex-direction: column;
    align-items: center;
    padding: 6px 1px;
}

.scroll-v .thumb {
    width: 100%;
    height: 132px;
    margin: 5px 0 auto;
    background: #cdcdcd;
}

.scroll-h {
    height: 17px;
    flex: none;
    display: flex;
    align-items: center;
    gap: 6px;
    padding: 1px 23px 1px 5px;
}

.scroll-h .thumb {
    flex: 1;
    height: 100%;
    margin-right: 16px;
    background: #cdcdcd;
}
```
